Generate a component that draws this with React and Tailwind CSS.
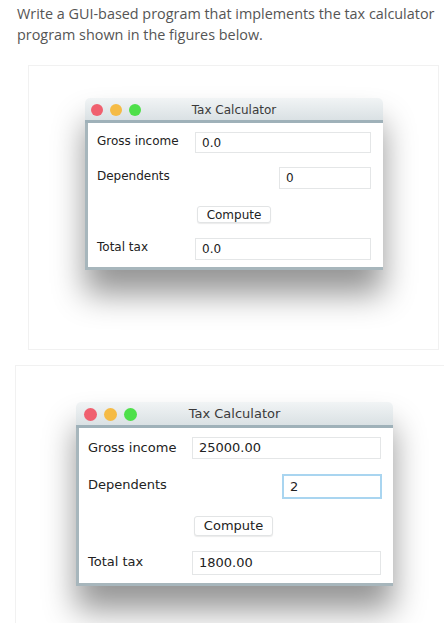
const ui = { fontFamily: '"DejaVu Sans", "Liberation Sans", sans-serif' };

function Lights({ small }) {
  const d = small ? "h-[12px] w-[12px]" : "h-[13px] w-[13px]";
  return (
    <div className="flex items-center gap-[7px]">
      <span className={d + " rounded-full bg-[#f0606f]"} />
      <span className={d + " rounded-full bg-[#f5bb45]"} />
      <span className={d + " rounded-full bg-[#4ee04a]"} />
    </div>
  );
}

function Field({ value, className }) {
  return (
    <div className={"flex items-center border border-[#e4e6e7] bg-white pl-[6px] text-[#222] " + className}>
      {value}
    </div>
  );
}

function TaxWindow({ big, gross, deps, total }) {
  const text = big ? "text-[13px]" : "text-[12px]";
  return (
    <div
      style={ui}
      className={
        "flex flex-col overflow-hidden rounded-t-[5px] bg-white shadow-[0_24px_32px_rgba(0,0,0,0.42)] " +
        (big ? "w-[317px]" : "w-[298px]")
      }
    >
      {/* title bar */}
      <div
        className={
          "relative flex items-center border-b-[3px] border-[#9fb1b9] bg-gradient-to-b from-[#f1f4f5] to-[#dae1e4] " +
          (big ? "h-[26px] pl-[8px] pt-[1px]" : "h-[25px] pl-[6px] pt-[1px]")
        }
      >
        <Lights small={!big} />
        <span className={"absolute inset-x-0 text-center text-[#3a3a3a] " + text}>Tax Calculator</span>
      </div>

      {/* body */}
      <div
        className={
          "flex flex-col border-l-[3px] border-b-[3px] border-[#a7b6bc] pr-[12px] text-[#222] " +
          text +
          (big ? " pl-[9px] pt-[9px] pb-[8px]" : " pl-[9px] pt-[9px] pb-[7px]")
        }
      >
        <div className="flex items-start">
          <span className={big ? "w-[104px] pt-[1px]" : "w-[98px]"}>Gross income</span>
          <Field value={gross} className={"flex-1 " + (big ? "h-[22px]" : "h-[21px]")} />
        </div>

        <div className={"flex items-start justify-between " + (big ? "mt-[15px]" : "mt-[14px]")}>
          <span className={big ? "pt-[1px]" : "pt-[0px]"}>Dependents</span>
          {big ? (
            <div className="flex h-[25px] w-[100px] items-center border-2 border-[#a9d5f0] bg-white pl-[6px] -mr-[1px]">
              {deps}
            </div>
          ) : (
            <Field value={deps} className="h-[22px] w-[92px]" />
          )}
        </div>

        <div className={big ? "mt-[17px] pl-[106px]" : "mt-[17px] pl-[100px]"}>
          <button
            className={
              "flex items-center justify-center rounded-[3px] border border-[#e2e4e5] bg-white text-[#222] shadow-[0_1px_1px_rgba(0,0,0,0.08)] " +
              (big ? "h-[20px] w-[79px]" : "h-[17px] w-[74px]")
            }
          >
            Compute
          </button>
        </div>

        <div className="mt-[15px] flex items-start">
          <span className={big ? "w-[104px] pt-[1px]" : "w-[98px]"}>Total tax</span>
          <Field value={total} className={"flex-1 " + (big ? "h-[24px]" : "h-[22px]")} />
        </div>
      </div>
    </div>
  );
}

export default function App() {
  return (
    <div className="h-[623px] w-[444px] overflow-hidden bg-white">
      <p
        style={{ fontFamily: '"Open Sans", "Liberation Sans", sans-serif' }}
        className="pl-[17px] pt-[3px] text-[14.4px] leading-[21px] text-[#555]"
      >
        Write a GUI-based program that implements the tax calculator program shown in the figures below.
      </p>

      {/* figure 1 */}
      <div className="ml-[28px] mt-[20px] h-[285px] w-[411px] border border-[#f1f1f1] pl-[56px] pt-[32px]">
        <TaxWindow gross="0.0" deps="0" total="0.0" />
      </div>

      {/* figure 2 */}
      <div className="ml-[15px] mt-[15px] h-[300px] w-[440px] border border-[#f1f1f1] pl-[60px] pt-[36px]">
        <TaxWindow big gross="25000.00" deps="2" total="1800.00" />
      </div>
    </div>
  );
}
